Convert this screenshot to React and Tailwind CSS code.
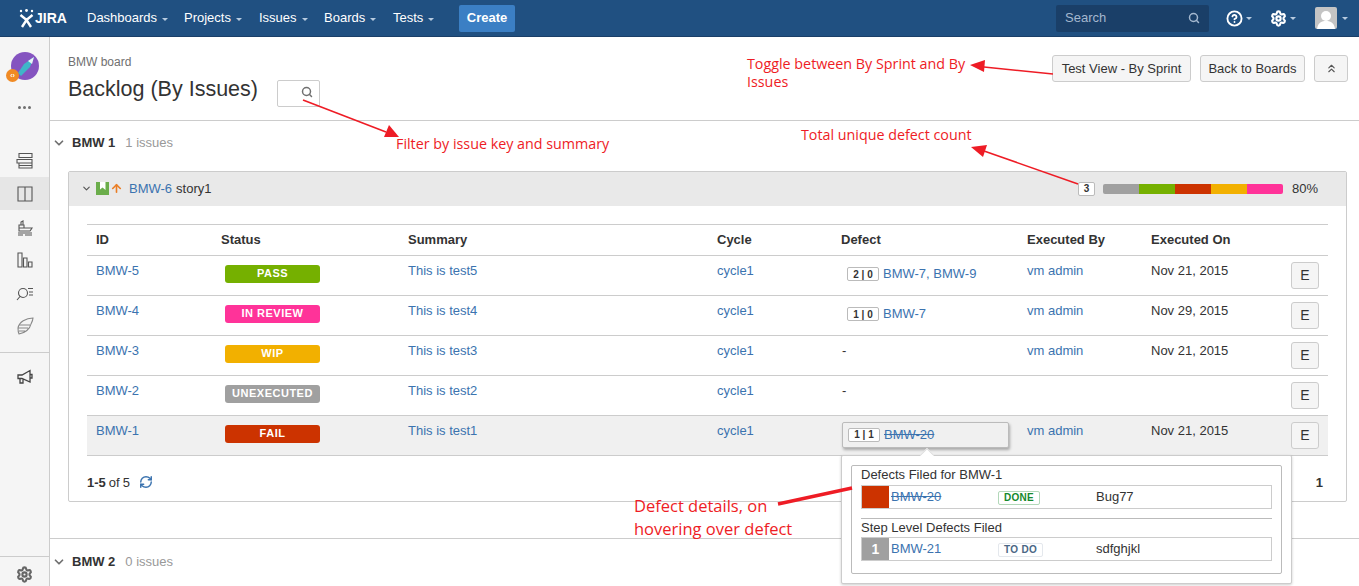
import { ChevronDown, ChevronsUp, Search, Settings, RefreshCw, CircleHelp, ArrowUp } from 'lucide-react';

const tests = [
  { id: 'BMW-5', status: 'PASS', color: 'bg-[#75b000]', summary: 'This is test5', defects: ['2 | 0', 'BMW-7, BMW-9'], by: 'vm admin', on: 'Nov 21, 2015' },
  { id: 'BMW-4', status: 'IN REVIEW', color: 'bg-[#ff3399]', summary: 'This is test4', defects: ['1 | 0', 'BMW-7'], by: 'vm admin', on: 'Nov 29, 2015' },
  { id: 'BMW-3', status: 'WIP', color: 'bg-[#f2b000]', summary: 'This is test3', by: 'vm admin', on: 'Nov 21, 2015' },
  { id: 'BMW-2', status: 'UNEXECUTED', color: 'bg-[#a0a0a0]', summary: 'This is test2' },
  { id: 'BMW-1', status: 'FAIL', color: 'bg-[#cc3300]', summary: 'This is test1', hovered: true, by: 'vm admin', on: 'Nov 21, 2015' },
];

const linkCls = 'text-[#3b73af]';

function NavItem({ label, className }) {
  return (
    <div className={`flex items-center gap-[5px] text-[13px] text-white ${className}`}>
      {label}
      <span className="mt-[2px] border-x-[3px] border-t-[3px] border-x-transparent border-t-[#b8cbe0]" />
    </div>
  );
}

function JiraLogo() {
  return (
    <div className="ml-[19px] flex w-[68px] items-center">
      <svg width="15" height="19" viewBox="0 0 15 19" fill="none" stroke="white" strokeWidth="2.4">
        <circle cx="2" cy="2" r="1.2" fill="white" stroke="none" />
        <circle cx="7.5" cy="1.5" r="1.4" fill="white" stroke="none" />
        <circle cx="13" cy="2" r="1.2" fill="white" stroke="none" />
        <path d="M1.5 6 L7.5 11 L13.5 6 M3 18 L7.5 11 L12 18" />
      </svg>
      <span className="ml-[1px] text-[14px] font-bold leading-none text-white">JIRA</span>
    </div>
  );
}

function TopBar() {
  return (
    <div className="flex h-[37px] items-center border-b border-[#1a3f68] bg-[#205081]">
      <JiraLogo />
      <NavItem label="Dashboards" className="w-[97px]" />
      <NavItem label="Projects" className="w-[75px]" />
      <NavItem label="Issues" className="w-[65px]" />
      <NavItem label="Boards" className="w-[69px]" />
      <NavItem label="Tests" className="w-[66px]" />
      <div className="flex h-[27px] w-[56px] items-center justify-center rounded-[2px] bg-[#3b7fc4] text-[13px] font-bold text-white">Create</div>
      <div className="ml-auto flex items-center">
        <div className="flex h-[27px] w-[153px] items-center justify-between rounded-[2px] bg-[#1a3f68] pl-[9px] pr-[9px] text-[13px] text-[#a4b8cf]">
          Search
          <Search size={12} strokeWidth={3} className="text-[#a4b8cf]" />
        </div>
        <div className="ml-[17px] flex w-[44px] items-center gap-[3px] text-white">
          <CircleHelp size={17} strokeWidth={2.6} />
          <span className="border-x-[3px] border-t-[3px] border-x-transparent border-t-[#b8cbe0]" />
        </div>
        <div className="flex w-[45px] items-center gap-[3px] text-white">
          <Settings size={17} strokeWidth={3} />
          <span className="border-x-[3px] border-t-[3px] border-x-transparent border-t-[#b8cbe0]" />
        </div>
        <div className="mr-[11px] flex items-center gap-[5px]">
          <div className="flex h-[22px] w-[22px] items-end justify-center overflow-hidden rounded-[2px] bg-[#c4c4c4]">
            <svg width="18" height="20" viewBox="0 0 18 20" fill="white">
              <circle cx="9" cy="7" r="5" />
              <path d="M0 20 C1 13 5 12 9 12 C13 12 17 13 18 20 Z" />
            </svg>
          </div>
          <span className="border-x-[3px] border-t-[3px] border-x-transparent border-t-[#b8cbe0]" />
        </div>
      </div>
    </div>
  );
}

function SideIcon({ active, children }) {
  return (
    <div className={`flex h-[33px] items-center justify-center ${active ? 'bg-[#e6e6e6]' : ''}`}>
      <svg width="18" height="18" viewBox="0 0 18 18" fill="none" stroke="#555" strokeWidth="1.1">
        {children}
      </svg>
    </div>
  );
}

function Sidebar() {
  return (
    <div className="flex w-[50px] shrink-0 flex-col border-r border-[#cccccc] bg-[#f5f5f5]">
      <div className="relative ml-[10px] mt-[14px] h-[30px] w-[30px]">
        <svg width="30" height="30" viewBox="0 0 30 30">
          <circle cx="15" cy="15" r="14" fill="#8554c0" />
          <path d="M8 22 L14 13 L24 6 L20 16 L11 25 Z" fill="#3fb5c8" />
          <path d="M18 10 L24 6 L22 13 Z" fill="#e8f4f6" />
        </svg>
        <div className="absolute bottom-[-1px] left-[-4px] flex h-[13px] w-[13px] items-center justify-center rounded-full bg-[#f08a24] text-[7px] font-bold leading-none text-white">‹›</div>
      </div>
      <div className="mt-[23px] flex h-[10px] justify-center gap-[2px] pt-[2px]">
        <span className="h-[3px] w-[3px] rounded-full bg-[#707070]" />
        <span className="h-[3px] w-[3px] rounded-full bg-[#707070]" />
        <span className="h-[3px] w-[3px] rounded-full bg-[#707070]" />
      </div>
      <div className="mt-[30px] border-0">
        <SideIcon>
          <path d="M3 1.5 H16 V5.5 H3 Z M1 7.5 H16 V11 H1 Z M3 11 V16 H16 V11 M3 13.5 H16" />
        </SideIcon>
        <SideIcon active>
          <path d="M2 2 H16 V16 H2 Z M9 2 V16" />
        </SideIcon>
        <SideIcon>
          <path d="M3 7 H8 V10 H3 Z M5 7 V4 L7 3 V7 M8 10 H16 L14 13 H3 V10 M2 15 H16 M2 17 H7 M9 17 H16" />
        </SideIcon>
        <SideIcon>
          <path d="M2 2 H6 V16 H2 Z M7.5 7 H11 V16 H7.5 Z M12.5 11 H16 V16 H12.5 Z" />
        </SideIcon>
        <SideIcon>
          <circle cx="7" cy="9" r="4.5" />
          <path d="M4 12.5 L1 16 M12 4.5 H17 M13 8 H17 M13 11 H17" />
        </SideIcon>
        <SideIcon>
          <path d="M17 1 C10 1 3 5 2 11 C2 13 2 15 3 17 C9 16 14 12 15 7 C16 5 17 3 17 1 Z M3 8 H14 M2 11 H12 M3 14 H9" stroke="#888" />
        </SideIcon>
      </div>
      <div className="mt-[10px] border-t border-[#cccccc] pt-[7px]">
        <SideIcon>
          <path d="M2 7 H6 L14 2.5 V14 L6 10.5 H2 Z M4 10.5 V15 H7 V11 M14 6.5 H16 V10 H14" stroke="#444" strokeWidth="1.3" />
        </SideIcon>
      </div>
      <div className="mt-auto flex h-[30px] items-center justify-center border-t border-[#cccccc] pt-[6px]">
        <Settings size={17} strokeWidth={3} className="text-[#666666]" />
      </div>
    </div>
  );
}

function Btn({ children, className }) {
  return (
    <div className={`flex h-[27px] items-center justify-center rounded-[3px] border border-[#cccccc] bg-[#f5f5f5] text-[#333333] ${className}`}>
      {children}
    </div>
  );
}

function CountBadge({ children }) {
  return (
    <span className="mr-[4px] inline-flex h-[14px] w-[32px] items-center justify-center rounded-[2px] border border-[#bbbbbb] bg-white text-[10px] font-bold text-[#333333]">
      {children}
    </span>
  );
}

function ProgressBar() {
  return (
    <div className="flex h-[10px] w-[180px] overflow-hidden rounded-[2px]">
      <div className="flex-1 bg-[#a0a0a0]" />
      <div className="flex-1 bg-[#75b000]" />
      <div className="flex-1 bg-[#cc3300]" />
      <div className="flex-1 bg-[#f2b000]" />
      <div className="flex-1 bg-[#ff3399]" />
    </div>
  );
}

function DefectRow({ swatch, swatchCls, struck, id, state, stateCls, text }) {
  return (
    <div className="flex h-[24px] items-center border border-[#cccccc] bg-white">
      <div className={`flex h-full w-[27px] shrink-0 items-center justify-center text-[14px] font-bold text-white ${swatchCls}`}>{swatch}</div>
      <span className={`ml-[2px] w-[107px] text-[13px] ${linkCls} ${struck ? 'line-through' : ''}`}>{id}</span>
      <span className="w-[98px]">
        <span className={`inline-flex h-[14px] items-center rounded-[2px] border px-[5px] text-[10px] font-bold leading-none tracking-[0.3px] ${stateCls}`}>{state}</span>
      </span>
      <span className="text-[13px] text-[#333333]">{text}</span>
    </div>
  );
}

function DefectPopup() {
  return (
    <div className="absolute left-[9px] top-[39px] z-10 h-[129px] w-[451px] rounded-[2px] border border-[#cccccc] bg-white p-[9px] shadow-[0_1px_3px_rgba(0,0,0,0.2)]">
      <div className="absolute left-[80px] top-[-6px] h-[10px] w-[10px] rotate-45 border-l border-t border-[#dddddd] bg-white" />
      <div className="h-[109px] rounded-[2px] border border-[#bbbbbb] px-[9px] text-[13px] leading-[18px] text-[#333333]">
        <div className="h-[19px]">Defects Filed for BMW-1</div>
        <DefectRow swatch="" swatchCls="bg-[#cc3300]" struck id="BMW-20" state="DONE" stateCls="border-[#b2d8b9] text-[#14892c]" text="Bug77" />
        <div className="mt-[9px] border-t border-[#bbbbbb] leading-[18px]">Step Level Defects Filed</div>
        <DefectRow swatch="1" swatchCls="bg-[#a0a0a0]" id="BMW-21" state="TO DO" stateCls="border-[#e4e8ed] text-[#4a6785]" text="sdfghjkl" />
      </div>
    </div>
  );
}

function TestRow({ t }) {
  return (
    <tr className={`h-[40px] border-b border-[#cccccc] align-top text-[13px] text-[#333333] ${t.hovered ? 'bg-[#f0f0f0]' : ''}`}>
      <td className={`pl-[9px] pt-[5px] ${linkCls}`}>{t.id}</td>
      <td className="pl-[13px] pt-[9px]">
        <div className={`flex h-[18px] w-[95px] items-center justify-center rounded-[3px] text-[11px] font-bold tracking-[0.5px] text-white ${t.color}`}>{t.status}</div>
      </td>
      <td className={`pl-[9px] pt-[5px] ${linkCls}`}>{t.summary}</td>
      <td className={`pl-[9px] pt-[5px] ${linkCls}`}>cycle1</td>
      <td className={`relative pl-[10px] ${t.defects ? 'pt-[8px]' : t.hovered ? 'pt-[6px]' : 'pt-[5px]'}`}>
        {t.defects && (
          <div className="pl-[5px]">
            <CountBadge>{t.defects[0]}</CountBadge>
            <span className={linkCls}>{t.defects[1]}</span>
          </div>
        )}
        {t.hovered && (
          <>
            <div className="flex h-[26px] w-[167px] items-center rounded-[2px] border border-[#bbbbbb] bg-[#f0f0f0] pl-[5px] shadow-[1px_2px_3px_rgba(0,0,0,0.3)]">
              <CountBadge>1 | 1</CountBadge>
              <span className={`${linkCls} line-through`}>BMW-20</span>
            </div>
            <DefectPopup />
          </>
        )}
        {!t.defects && !t.hovered && <span>-</span>}
      </td>
      <td className={`pl-[9px] pt-[5px] ${linkCls}`}>{t.by}</td>
      <td className="pl-[9px] pt-[5px]">{t.on}</td>
      <td className="pl-[9px] pt-[6px]">
        <Btn className="w-[28px] text-[14px]">E</Btn>
      </td>
    </tr>
  );
}

function IssueTable() {
  return (
    <table className="w-[1241px] table-fixed border-collapse">
      <thead>
        <tr className="h-[31px] border-y border-[#cccccc] text-left text-[13px] font-bold text-[#333333]">
          <th className="w-[125px] pl-[9px] font-bold">ID</th>
          <th className="w-[187px] pl-[9px] font-bold">Status</th>
          <th className="w-[309px] pl-[9px] font-bold">Summary</th>
          <th className="w-[124px] pl-[9px] font-bold">Cycle</th>
          <th className="w-[186px] pl-[9px] font-bold">Defect</th>
          <th className="w-[124px] pl-[9px] font-bold">Executed By</th>
          <th className="w-[140px] pl-[9px] font-bold">Executed On</th>
          <th />
        </tr>
      </thead>
      <tbody>
        {tests.map((t) => (
          <TestRow key={t.id} t={t} />
        ))}
      </tbody>
    </table>
  );
}

function SprintHead({ name, count }) {
  return (
    <div className="flex items-center">
      <ChevronDown size={14} strokeWidth={3} className="ml-[2px] text-[#707070]" />
      <span className="ml-[6px] text-[13px] font-bold text-[#333333]">{name}</span>
      <span className="ml-[10px] text-[13px] text-[#999999]">{count}</span>
    </div>
  );
}

function StoryPanel() {
  return (
    <div className="ml-[18px] mr-[12px] mt-[18px] h-[331px] rounded-[2px] border border-[#cccccc]">
      <div className="flex h-[34px] items-center bg-[#e9e9e9] pr-[28px] text-[13px]">
        <ChevronDown size={11} strokeWidth={2.5} className="ml-[12px] text-[#555555]" />
        <div className="ml-[4px] flex h-[13px] w-[13px] justify-center bg-[#6bad4b]">
          <div className="h-[8px] w-[6px] bg-white [clip-path:polygon(0_0,100%_0,100%_100%,50%_70%,0_100%)]" />
        </div>
        <ArrowUp size={13} strokeWidth={3} className="ml-[1px] text-[#ea7d24]" />
        <span className={`ml-[6px] text-[13px] ${linkCls}`}>BMW-6</span>
        <span className="ml-[4px] text-[#333333]">story1</span>
        <div className="ml-auto flex items-center">
          <div className="mr-[8px] flex h-[14px] w-[17px] items-center justify-center rounded-[2px] border border-[#bbbbbb] bg-white text-[10px] font-bold text-[#333333]">3</div>
          <ProgressBar />
          <span className="ml-[9px] text-[13px] text-[#333333]">80%</span>
        </div>
      </div>
      <div className="px-[18px] pt-[18px]">
        <IssueTable />
        <div className="mt-[17px] flex items-center justify-between pr-[5px] text-[13px] text-[#333333]">
          <div className="flex items-center">
            <span className="font-bold">1-5</span>
            <span className="ml-[3px]">of</span>
            <span className="ml-[3px]">5</span>
            <RefreshCw size={14} strokeWidth={2.5} className={`ml-[9px] ${linkCls}`} />
          </div>
          <span className="font-bold">1</span>
        </div>
      </div>
    </div>
  );
}

function Annotations() {
  return (
    <>
      <svg className="pointer-events-none absolute left-0 top-0 z-20" width="1359" height="586" viewBox="0 0 1359 586">
        <g stroke="#ee1c25" strokeWidth="1.6" fill="#ee1c25">
          <path d="M1053 74 L984 67" />
          <path d="M970 65 L985 60 L984 72 Z" stroke="none" />
          <path d="M303 100 L386 132" />
          <path d="M399 137 L384 137 L389 125 Z" stroke="none" />
          <path d="M1078 184 L984 151" />
          <path d="M971 147 L987 145 L983 157 Z" stroke="none" />
          <path d="M778 504 L852 488" strokeWidth="3.5" />
        </g>
      </svg>
      <div className="absolute left-[747px] top-[55px] z-20 w-[250px] text-[14.3px] leading-[18px] text-[#ee1c25] [font-family:'Open_Sans',sans-serif]">
        Toggle between By Sprint and By Issues
      </div>
      <div className="absolute left-[396px] top-[135px] z-20 text-[14.3px] leading-[18px] text-[#ee1c25] [font-family:'Open_Sans',sans-serif]">
        Filter by issue key and summary
      </div>
      <div className="absolute left-[801px] top-[126px] z-20 text-[14.3px] leading-[18px] text-[#ee1c25] [font-family:'Open_Sans',sans-serif]">
        Total unique defect count
      </div>
      <div className="absolute left-[634px] top-[494px] z-20 w-[190px] text-[16.5px] leading-[23px] text-[#ee1c25] [font-family:'Open_Sans',sans-serif]">
        Defect details, on hovering over defect
      </div>
    </>
  );
}

export default function App() {
  return (
    <div className="relative h-[586px] w-[1359px] overflow-hidden bg-white [font-family:'Liberation_Sans',Arial,sans-serif]">
      <TopBar />
      <div className="flex h-[549px]">
        <Sidebar />
        <div className="min-w-0 flex-1">
          <div className="flex h-[84px] border-b border-[#cccccc] pl-[18px] pr-[11px]">
            <div className="pt-[17px]">
              <div className="text-[12px] leading-[16px] text-[#707070]">BMW board</div>
              <div className="mt-[5px] flex items-start">
                <span className="text-[21.5px] leading-[28px] text-[#333333]">Backlog (By Issues)</span>
                <div className="ml-[19px] mt-[5px] flex h-[27px] w-[43px] justify-end rounded-[2px] border border-[#cccccc] bg-white pr-[6px] pt-[5px]">
                  <Search size={12} strokeWidth={3} className="text-[#707070]" />
                </div>
              </div>
            </div>
            <div className="ml-auto mt-[18px] flex gap-[9px] text-[13px]">
              <Btn className="w-[139px]">Test View - By Sprint</Btn>
              <Btn className="w-[105px]">Back to Boards</Btn>
              <Btn className="w-[34px]">
                <ChevronsUp size={13} className="text-[#555555]" />
              </Btn>
            </div>
          </div>
          <div className="h-[418px] border-b border-[#cccccc] pt-[12px]">
            <SprintHead name="BMW 1" count="1 issues" />
            <StoryPanel />
          </div>
          <div className="pt-[13px]">
            <SprintHead name="BMW 2" count="0 issues" />
          </div>
        </div>
      </div>
      <Annotations />
    </div>
  );
}
